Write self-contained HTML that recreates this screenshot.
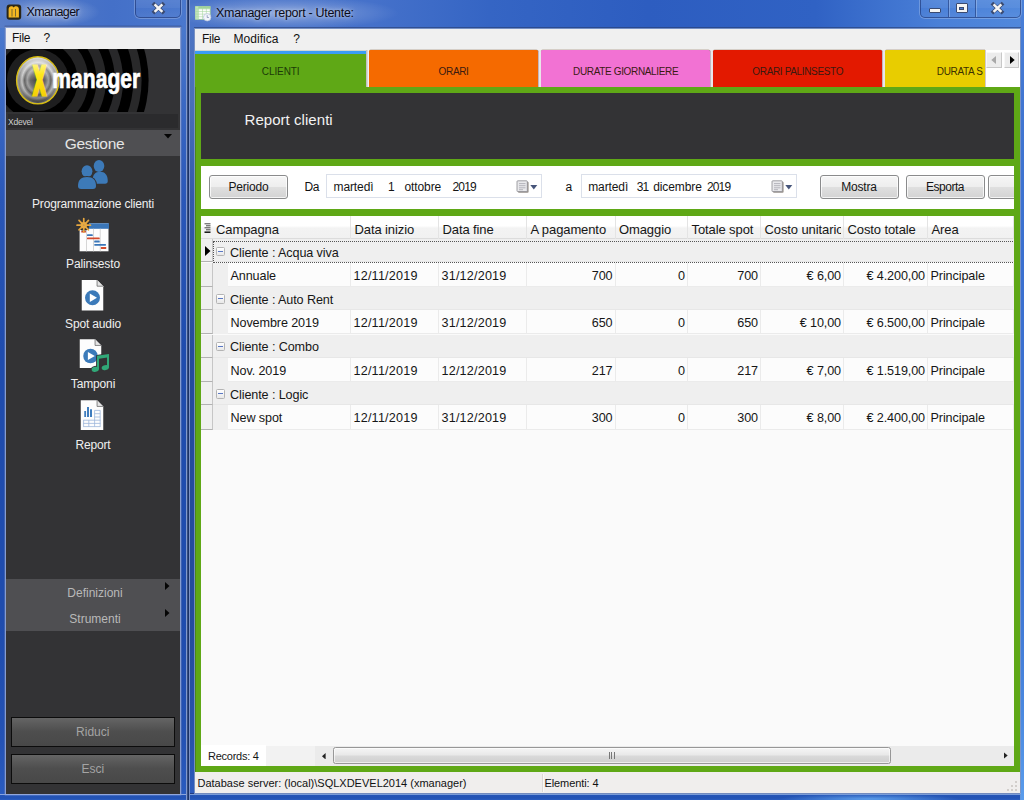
<!DOCTYPE html>
<html lang="it">
<head>
<meta charset="utf-8">
<title>Xmanager report</title>
<style>
*{box-sizing:border-box;margin:0;padding:0}
html,body{width:1024px;height:800px;overflow:hidden}
body{position:relative;font-family:"Liberation Sans",sans-serif;font-size:12px;color:#111;background:#2f5fb8}
.abs{position:absolute}
.t{position:absolute;white-space:nowrap;line-height:1}
/* ---------- frames ---------- */
#lwin{left:0;top:0;width:187px;height:800px;background:linear-gradient(180deg,#5382d4 0,#4a79cd 28px,#3b69c4 100px,#2a57b8 200px,#1f4cae 350px,#1f4cad 620px,#2452b4 740px,#2a5cc0 800px)}
#rwin{left:189px;top:0;width:835px;height:800px;background:linear-gradient(180deg,#4a7ad0 0,#4c74c4 28px,#4a70b8 100px,#3259aa 200px,#244b9c 350px,#244b9c 620px,#2852aa 740px,#2d5cc0 800px)}
#ltglow{left:0;top:0;width:187px;height:28px;background:radial-gradient(ellipse 50px 15px at 50px 12px,rgba(255,255,255,.36),rgba(255,255,255,0) 100%),linear-gradient(90deg,#587dc8 0,#4c75c7 30%,#4470c8 60%,#4a78ce 100%)}
#rtglow{left:189px;top:0;width:835px;height:29px;background:radial-gradient(ellipse 115px 17px at 95px 13px,rgba(255,255,255,.36),rgba(255,255,255,0) 100%),linear-gradient(90deg,#4a74c8 0,#4571ca 22%,#3565c4 36%,#2d5dc0 55%,#3062c4 75%,#4a80d8 90%,#5088dc 100%)}
#divider{left:186px;top:0;width:3.5px;height:800px;background:linear-gradient(90deg,#8299cc 0,#8299cc 30%,#1b3266 40%,#1b3266 64%,#7b92c6 74%,#7b92c6 100%)}
.ttl{font-size:12.5px;color:#0b0b18;text-shadow:0 0 6px rgba(255,255,255,.55),0 0 3px rgba(255,255,255,.4)}
.capbox{top:-1px;height:18.5px;border:1px solid rgba(20,40,100,.55);border-radius:0 0 5px 5px;background:linear-gradient(180deg,rgba(255,255,255,.09) 0,rgba(255,255,255,.06) 45%,rgba(255,255,255,.01) 50%,rgba(255,255,255,.05) 100%);box-shadow:0 0 0 1px rgba(255,255,255,.22)}
/* ---------- left client ---------- */
#lclient{left:6px;top:28px;width:174px;height:766px;background:#333335;box-shadow:0 0 0 1.3px rgba(150,172,222,.85),0 -1px 0 1.3px rgba(40,60,110,.6)}
#lmenu{left:0;top:0;width:174px;height:20.7px;background:#f0f0f0}
#logo{left:0;top:20.7px;width:174px;height:63.3px;background:#333335;overflow:hidden}
#xdevel{left:1.5px;top:85.8px;width:170.5px;height:13.8px;background:#2b2b2d}
.hdr{left:0;width:174px;background:#4f4f52}
.navt{color:#efefef;font-size:12px;text-align:center;left:-0.5px;width:175px;letter-spacing:-0.15px}
.btn-d{left:5px;width:163.5px;height:30px;border:1px solid #0c0c0c;background:linear-gradient(180deg,#656565 0,#5a5a5a 22%,#4e4e4e 48%,#484848 100%);color:#a4a4a4;text-align:center;font-size:12px}
/* ---------- right client ---------- */
#rclient{left:195px;top:29px;width:825px;height:764px;background:#f0f0f0;box-shadow:0 0 0 1px rgba(150,172,215,.7),0 -1px 0 1px rgba(40,60,110,.6)}
#rmenu{left:0;top:0;width:825px;height:21px;background:#f0f0f0}
.tab{top:21.4px;height:36.5px;border-radius:1.5px 1.5px 0 0;box-shadow:0 -0.5px 0 rgba(120,90,60,.45),0.8px 0 0 rgba(90,60,80,.35)}
.tabt{font-size:10px;letter-spacing:-0.35px;color:#3a1a10;top:16.3px;text-align:center}
#green{left:0;top:57.5px;width:825px;height:685.5px;background:#5fa816;box-shadow:inset 1px 0 0 rgba(60,110,30,.55)}
#dark{left:6px;top:64px;width:813px;height:66px;background:#333335}
#tool{left:6px;top:137px;width:813px;height:43px;background:#fff;overflow:hidden}
#grid{left:6px;top:186.5px;width:812.5px;height:550px;background:#fafafa;overflow:hidden}
#status{left:0;top:743px;width:825px;height:21px;background:#f0eeed}
.wbtn{top:9px;height:24px;border:1px solid #8a8b8c;border-radius:3px;background:linear-gradient(180deg,#f6f6f6 0,#eeeeee 48%,#dfdfdf 52%,#d3d3d3 100%);box-shadow:inset 0 0 0 1px rgba(255,255,255,.75)}
.wbt{font-size:12px;top:5px;left:0;width:100%;text-align:center;color:#151515;letter-spacing:-0.2px}
.dp{top:8px;height:24px;border:1px solid #dbe0ea;background:#fff}
.dpt{font-size:12px;top:5.5px;color:#151515;letter-spacing:-0.1px}
/* grid */
.gh{top:0;height:23px;border-right:1px solid #e4e4e4;overflow:hidden}
.gt{font-size:12.6px;color:#161616;letter-spacing:-0.1px}
.ind{left:0;width:12px;background:#f0f0f0;border-right:1px solid #c6c6c6;border-bottom:1px solid #b2b2b2}
.grp{left:12px;width:800.5px;background:#efefef;border-bottom:1px solid #e7e7e7}
.indent{left:12px;width:15px;background:#efefef}
.dc{background:#fcfcfc;border-right:1px solid #ebebeb;border-bottom:1px solid #ebebeb;overflow:hidden}
.ebox{left:3px;top:7.2px;width:8.6px;height:9.4px;border:1px solid #b4b4b4;background:linear-gradient(#fff,#e8e8e8);border-radius:1.5px}
.ebox:after{content:"";position:absolute;left:1px;top:3px;width:4.6px;height:1px;background:#5a78c4}
</style>
</head>
<body>
<div id="lwin" class="abs"></div>
<div id="rwin" class="abs"></div>
<div id="ltglow" class="abs"></div>
<div id="rtglow" class="abs"></div>
<div class="abs" style="left:189px;top:792.5px;width:835px;height:7.5px;background:radial-gradient(ellipse 90px 5px at 680px 6px,rgba(110,180,250,.75),rgba(110,180,250,0) 100%),linear-gradient(180deg,#1f3a80 0,#1f3a80 14%,#7a9cd8 15%,#7a9cd8 28%,#2454b6 30%,#2353b4 70%,#2a5cc0 100%)"></div>
<div class="abs" style="left:0;top:794px;width:187px;height:6px;background:linear-gradient(180deg,#8aa4dc 0,#8aa4dc 18%,#2454b6 20%,#2353b4 70%,#2a5cc0 100%)"></div>
<div id="divider" class="abs"></div>
<div class="abs" style="left:1020px;top:0;width:4px;height:800px;background:linear-gradient(90deg,rgba(120,140,190,.6) 0,rgba(120,140,190,0) 28%),linear-gradient(180deg,#4a80d8 0,#4176d2 100px,#3a70d0 250px,#3a70d0 560px,#4a88e0 710px,#5a9cec 800px)"></div>

<!-- LEFT WINDOW TITLE -->
<svg class="abs" style="left:6px;top:3.5px" width="16" height="16.500" viewBox="0 0 16 16.500"><rect x="0.600" y="0.600" width="14.600" height="15.200" rx="3" fill="#2a2618"/><path d="M2.600 13.600V5.200c0-2 1.200-3 2.700-3 1 0 1.900.5 2.400 1.400.5-.9 1.400-1.400 2.400-1.400 1.600 0 2.800 1 2.800 3v8.400z" fill="#f4b722"/><path d="M6 5v7.500M9.500 5v7.500" stroke="#7a6a30" stroke-width="1"/></svg>
<div class="t ttl" style="left:26.5px;top:6px;letter-spacing:-0.65px">Xmanager</div>
<div class="abs capbox" style="left:135px;width:45.5px">
  <svg class="abs" style="left:16.5px;top:2.6px" width="11.4" height="9.8" viewBox="0 0 13 11" overflow="visible"><path d="M1.5 1.5L11 10M11 1.5L1.5 10" stroke="#3a4a70" stroke-width="4.4" stroke-linecap="square" fill="none"/><path d="M1.8 1.5L10.7 10M10.7 1.5L1.8 10" stroke="#f4f4f4" stroke-width="2.9" fill="none"/></svg>
</div>

<div id="lclient" class="abs">
  <div id="lmenu" class="abs"><span class="t" style="left:6px;top:3.8px;font-size:12px;letter-spacing:-0.3px">File</span><span class="t" style="left:37.5px;top:3.8px;font-size:12px">?</span></div>
  <div id="logo" class="abs">
<svg class="abs" style="left:0;top:0" width="174" height="63.3" viewBox="0 0 174 63.3">
<defs><radialGradient id="dg" cx="0.5" cy="0.5" r="0.5"><stop offset="0" stop-color="#333"/><stop offset="0.35" stop-color="#606060"/><stop offset="0.5" stop-color="#999"/><stop offset="0.62" stop-color="#585858"/><stop offset="0.75" stop-color="#c0c0c0"/><stop offset="0.88" stop-color="#787878"/><stop offset="1" stop-color="#a8a8a8"/></radialGradient>
<linearGradient id="sh" x1="0" y1="0" x2="0" y2="1"><stop offset="0" stop-color="#fff" stop-opacity=".7"/><stop offset=".5" stop-color="#fff" stop-opacity=".05"/><stop offset="1" stop-color="#000" stop-opacity=".5"/></linearGradient>
<linearGradient id="yx" x1="0" y1="0" x2="0" y2="1"><stop offset="0" stop-color="#fff9b0"/><stop offset=".35" stop-color="#ffe81a"/><stop offset="1" stop-color="#f2c800"/></linearGradient></defs>
<circle cx="31.8" cy="31.3" r="110.8" fill="#000"/>
<circle cx="31.8" cy="31.3" r="103.8" fill="#29292a"/>
<circle cx="31.8" cy="31.3" r="95.5" fill="#000"/>
<circle cx="31.8" cy="31.3" r="85.3" fill="#28282a"/>
<circle cx="31.8" cy="31.3" r="77.1" fill="#000"/>
<circle cx="31.8" cy="31.3" r="68.2" fill="#262627"/>
<circle cx="31.8" cy="31.3" r="58.7" fill="#000"/>
<circle cx="31.8" cy="31.3" r="50.6" fill="#242425"/>
<circle cx="31.8" cy="31.3" r="40" fill="#000"/>
<circle cx="31.8" cy="31.3" r="31" fill="#1e1e1f"/>
<ellipse cx="31.8" cy="31.3" rx="21.2" ry="23.6" fill="url(#dg)" stroke="#d9be10" stroke-width="1.4"/>
<ellipse cx="31.8" cy="31.3" rx="20.4" ry="22.8" fill="url(#sh)"/>
<text x="27.7" y="45.3" font-family="Liberation Sans, sans-serif" font-weight="bold" font-size="39" fill="url(#yx)" stroke="url(#yx)" stroke-width="5.2" stroke-linejoin="miter" textLength="11.4" lengthAdjust="spacingAndGlyphs">X</text>
<text x="46.3" y="39.1" font-family="Liberation Sans, sans-serif" font-weight="bold" font-size="28.5" fill="#fff" stroke="#fff" stroke-width="0.7" textLength="88" lengthAdjust="spacingAndGlyphs">manager</text>
</svg>
  </div>
  <div id="xdevel" class="abs"><span class="t" style="left:0.5px;top:3.8px;font-size:8.5px;color:#d0d0d0;letter-spacing:-0.2px">Xdevel</span></div>
  <div class="abs hdr" style="top:102px;height:26px"><span class="t" style="left:0;width:177px;text-align:center;top:5.5px;font-size:15.5px;color:#e4e4e4;letter-spacing:-0.3px">Gestione</span>
    <svg class="abs" style="left:158px;top:4px" width="8" height="5" viewBox="0 0 8 5"><path d="M0 0h8L4 4.5z" fill="#050505"/></svg>
  </div>
<svg class="abs" style="left:0;top:100px" width="175" height="340" viewBox="6 128 175 340">
<g fill="#3d7ab8"><ellipse cx="99" cy="166" rx="5.3" ry="5.9"/><path d="M92.5 183.75V181C92.5 175 95 171.75 100 171.75C105 171.75 107.75 175 107.75 181Q107.75 183.75 105 183.75z"/><g stroke="#333335" stroke-width="2" paint-order="stroke"><ellipse cx="87" cy="171.25" rx="5.4" ry="5.9"/><path d="M78 186C78 180 81 177 87 177C93 177 96 180 96 186Q96 189 93 189H81Q78 189 78 186z"/></g></g>
<g><rect x="79.6" y="223.3" width="28.9" height="28" fill="#fdfdfd"/><rect x="79.6" y="223.3" width="29.4" height="5.5" fill="#3a76b8"/><path d="M86.5 228.8v22.5M93.5 228.8v22.5M100.25 228.8v22.5" stroke="#d6d6d6" stroke-width="1"/><rect x="87" y="234.2" width="5.8" height="1.8" rx="0.6" fill="#3a76b8"/><rect x="87" y="237.5" width="12.7" height="1.8" rx="0.6" fill="#d24a2c"/><rect x="94.2" y="240.6" width="5.5" height="1.9" rx="0.6" fill="#3a76b8"/><rect x="94.2" y="243.9" width="11.8" height="1.8" rx="0.6" fill="#3a76b8"/><rect x="100.8" y="247" width="5.5" height="1.9" rx="0.6" fill="#d24a2c"/><circle cx="83.75" cy="225.2" r="5.6" fill="#333335"/><rect x="79" y="223" width="9.7" height="6.6" fill="#333335"/><path d="M81.3 231h4.6v1.5h-4.6z" fill="#c8402a"/><path d="M85.75 225.20L90.45 225.20M85.16 226.61L88.49 229.94M83.75 227.20L83.75 231.90M82.34 226.61L79.01 229.94M81.75 225.20L77.05 225.20M82.34 223.79L79.01 220.46M83.75 223.20L83.75 218.50M85.16 223.79L88.49 220.46" stroke="#e6a63e" stroke-width="1.7" stroke-linecap="round" fill="none"/><circle cx="83.75" cy="225.2" r="3.2" fill="#e8aa42"/><circle cx="83.75" cy="225.2" r="0.9" fill="#c89a50"/></g>
<path d="M81.75 280H97.05L103.25 286.2V310.5H81.75z" fill="#fdfdfd"/><path d="M97.05 280V286.2H103.25z" fill="#e4e4e4"/><path d="M97.05 280V286.2H103.25" stroke="#5a5a5a" stroke-width="0.7" fill="none"/><circle cx="92.5" cy="297.75" r="7.5" fill="#3b7ab9"/><path d="M89.80 293.55L97.00 297.75L89.80 301.95z" fill="#fff"/>
<path d="M79.75 339.25H95.05L101.25 345.45V368H79.75z" fill="#fdfdfd"/><path d="M95.05 339.25V345.45H101.25z" fill="#e4e4e4"/><path d="M95.05 339.25V345.45H101.25" stroke="#5a5a5a" stroke-width="0.7" fill="none"/><circle cx="90.5" cy="356" r="7.25" fill="#3b7ab9"/><path d="M87.89 351.94L94.85 356L87.89 360.06z" fill="#fff"/>
<path d="M99 358.8L107 357.5V366L103 367.5L102 369H99z" fill="#333335"/><g fill="#333335" stroke="#333335" stroke-width="1.8" stroke-linejoin="round"><path d="M97 355.8L109 354V357.2L99 358.8V369.2H97z"/><rect x="107" y="355" width="2" height="12.6"/><ellipse cx="95.3" cy="369.3" rx="3.7" ry="2.5" transform="rotate(-14 95.3 369.3)"/><ellipse cx="105.3" cy="367.6" rx="3.7" ry="2.5" transform="rotate(-14 105.3 367.6)"/></g><g fill="#31a878"><path d="M97 355.8L109 354V357.2L99 358.8V369.2H97z"/><rect x="107" y="355" width="2" height="12.6"/><ellipse cx="95.3" cy="369.3" rx="3.7" ry="2.5" transform="rotate(-14 95.3 369.3)"/><ellipse cx="105.3" cy="367.6" rx="3.7" ry="2.5" transform="rotate(-14 105.3 367.6)"/></g>
<path d="M80.75 400.25H97.05L103.25 406.45V430H80.75z" fill="#fdfdfd"/><path d="M97.05 400.25V406.45H103.25z" fill="#e4e4e4"/><path d="M97.05 400.25V406.45H103.25" stroke="#5a5a5a" stroke-width="0.7" fill="none"/>
<g fill="#3f7dbe"><rect x="84.250" y="411" width="1.800" height="6"/><rect x="87" y="407" width="2" height="10"/><rect x="90" y="409.250" width="2" height="7.750"/></g><g stroke="#9db6da" stroke-width="0.8" fill="none"><path d="M83.250 420.200h17.250M83.250 423.400h17.250M83.250 426.600h17.250M83.600 420.200v6.400M88.800 420.200v6.400M94.600 410.400v16.200M100.200 410.400v16.200M94.600 410.400h5.600M94.600 413.700h5.600M94.600 417h5.600"/></g>
</svg>
  <div class="t navt" style="top:170px">Programmazione clienti</div>
  <div class="t navt" style="top:230px">Palinsesto</div>
  <div class="t navt" style="top:290px">Spot audio</div>
  <div class="t navt" style="top:350px">Tamponi</div>
  <div class="t navt" style="top:410.5px">Report</div>
  <div class="abs hdr" style="top:550.7px;height:52.2px">
    <span class="t" style="left:0;width:178px;text-align:center;top:8px;font-size:12px;color:#b9b9b9">Definizioni</span>
    <span class="t" style="left:0;width:178px;text-align:center;top:34px;font-size:12px;color:#b9b9b9">Strumenti</span>
    <svg class="abs" style="left:158.5px;top:3.5px" width="5" height="8" viewBox="0 0 5 8"><path d="M0 0v8L4.5 4z" fill="#050505"/></svg>
    <svg class="abs" style="left:158.5px;top:30px" width="5" height="8" viewBox="0 0 5 8"><path d="M0 0v8L4.5 4z" fill="#050505"/></svg>
  </div>
  <div class="abs btn-d" style="top:689px"><span class="t" style="left:0;width:100%;top:8px">Riduci</span></div>
  <div class="abs btn-d" style="top:726px"><span class="t" style="left:0;width:100%;top:8px">Esci</span></div>
</div>

<!-- RIGHT WINDOW TITLE -->
<svg class="abs" style="left:195px;top:5.5px" width="17" height="16.500" viewBox="0 0 17 16.500"><rect x="0.400" y="0.500" width="14.800" height="12.800" fill="#fbfdfb" stroke="#9acb94" stroke-width="0.7"/><rect x="0.400" y="0.500" width="14.800" height="2.200" fill="#9fd398"/><rect x="0.400" y="0.500" width="3" height="12.800" fill="#bfe2ba"/><path d="M0.400 2.900h14.800M0.400 5.500h14.800M0.400 8.100h14.800M0.400 10.700h14.800M3.600 0.500v12.800M7.500 0.500v12.800M11.400 0.500v12.800" stroke="#a6d6a0" stroke-width="0.55" fill="none"/><circle cx="12.200" cy="11.300" r="3.700" fill="#f2f5fb" stroke="#b4c0da" stroke-width="0.7"/><path d="M12.200 9.200v2.300h1.700" stroke="#7684a6" stroke-width="0.7" fill="none"/></svg>
<div class="t ttl" style="left:216px;top:7.3px;letter-spacing:-0.3px">Xmanager report - Utente:</div>
<div class="abs capbox" style="left:920px;width:100.5px">
  <span class="abs" style="left:27px;top:0;width:1px;height:17px;background:rgba(20,40,100,.5);box-shadow:1px 0 0 rgba(255,255,255,.25)"></span>
  <span class="abs" style="left:53.5px;top:0;width:1px;height:17px;background:rgba(20,40,100,.5);box-shadow:1px 0 0 rgba(255,255,255,.25)"></span>
  <span class="abs" style="left:8px;top:8px;width:12px;height:5px;background:#f4f4f4;border:1px solid #3a4a70;border-radius:1px"></span>
  <span class="abs" style="left:34.5px;top:3px;width:12px;height:10px;border:1px solid #3a4a70;background:#f4f4f4;border-radius:1px"><span class="abs" style="left:2.5px;top:2.5px;width:5px;height:3px;background:#4a78cc;border:1px solid #3a4a70"></span></span>
  <svg class="abs" style="left:71.3px;top:2.6px" width="11.4" height="9.8" viewBox="0 0 13 11" overflow="visible"><path d="M1.5 1.5L11 10M11 1.5L1.5 10" stroke="#3a4a70" stroke-width="4.4" stroke-linecap="square" fill="none"/><path d="M1.8 1.5L10.7 10M10.7 1.5L1.8 10" stroke="#f4f4f4" stroke-width="2.9" fill="none"/></svg>
</div>

<div id="rclient" class="abs">
  <div id="rmenu" class="abs"><span class="t" style="left:7px;top:3.8px;font-size:12px;letter-spacing:-0.3px">File</span><span class="t" style="left:38.5px;top:3.8px;font-size:12px;letter-spacing:0.05px">Modifica</span><span class="t" style="left:98.3px;top:3.8px;font-size:12px">?</span></div>
  <div class="abs" style="left:0;top:21px;width:825px;height:37px;background:#fff"></div><div class="abs" style="left:172px;top:21.4px;width:520px;height:36.5px;background:#e9e5e9"></div>
  <div class="abs" style="left:0;top:21.4px;width:171.25px;height:1px;background:#cfd8d0"></div><div class="abs" style="left:0;top:22px;width:171.25px;height:37px;background:#5fa816;border-top:3px solid #3a9df5"><span class="t tabt" style="left:0;width:100%;top:13.2px;color:#1c3a08;letter-spacing:-0.1px">CLIENTI</span></div>
  <div class="abs" style="left:171.25px;top:21.4px;width:2.75px;height:36.5px;background:linear-gradient(90deg,#b8b8b8 0,#d8d8d8 50%,#fff 100%)"></div>
  <div class="abs tab" style="left:174px;width:169.1px;background:#f56a00"><span class="t tabt" style="left:0;width:100%">ORARI</span></div>
  <div class="abs tab" style="left:346.1px;width:169.1px;background:#f272d3"><span class="t tabt" style="left:0;width:100%">DURATE GIORNALIERE</span></div>
  <div class="abs tab" style="left:518.2px;width:169.1px;background:#e31900"><span class="t tabt" style="left:0;width:100%">ORARI PALINSESTO</span></div>
  <div class="abs tab" style="left:690.3px;width:99.3px;background:#e8cd00;overflow:hidden;border-radius:1.5px 0 0 0"><span class="t tabt" style="left:51.5px;color:#3a3000">DURATA S</span></div>
  <div class="abs" style="left:791px;top:22.5px;width:15.5px;height:16.5px;background:#ececec;border:1px solid #c8c8c8;border-top-color:#f8f8f8;border-left-color:#f8f8f8"><svg class="abs" style="left:4px;top:3px" width="5" height="8" viewBox="0 0 5 8"><path d="M5 0v8L0.3 4z" fill="#a8a8a8"/></svg></div>
  <div class="abs" style="left:808.5px;top:22.5px;width:15.5px;height:16.5px;background:#ececec;border:1px solid #c8c8c8;border-top-color:#f8f8f8;border-left-color:#f8f8f8"><svg class="abs" style="left:5px;top:3px" width="5" height="8" viewBox="0 0 5 8"><path d="M0 0v8L4.7 4z" fill="#000"/></svg></div>
  <div id="green" class="abs"></div>
  <div id="dark" class="abs"><span class="t" style="left:43.5px;top:19px;font-size:15px;color:#f2f2f2;letter-spacing:0.05px">Report clienti</span></div>
  <div id="tool" class="abs">
    <div class="abs wbtn" style="left:8px;width:79px"><span class="t wbt">Periodo</span></div>
    <span class="t" style="left:103.5px;top:14.5px;font-size:12px;letter-spacing:-0.4px">Da</span>
    <div class="abs dp" style="left:125px;width:216.4px">
      <span class="t dpt" style="left:6.5px">martedì</span><span class="t dpt" style="left:61px">1</span><span class="t dpt" style="left:77.5px">ottobre</span><span class="t dpt" style="left:125.5px;letter-spacing:-0.8px">2019</span>
<svg class="abs" style="left:189px;top:4.500px" width="22" height="14" viewBox="0 0 22 14"><rect x="2" y="1.800" width="10.600" height="11" rx="1" fill="#9a948e"/><rect x="1" y="0.800" width="10.300" height="10.800" rx="0.800" fill="#e9e9ec" stroke="#8a8a90" stroke-width="0.8"/><path d="M3 3.600h6.500M3 5.700h6.500M3 7.800h6.500M3 9.700h4" stroke="#a6a6ae" stroke-width="0.8"/><path d="M14.300 5h7l-3.500 4.400z" fill="#46557a"/></svg>
    </div>
    <span class="t" style="left:364.5px;top:14.5px;font-size:12px">a</span>
    <div class="abs dp" style="left:379.7px;width:216px">
      <span class="t dpt" style="left:6.5px">martedì</span><span class="t dpt" style="left:55px;letter-spacing:-0.8px">31</span><span class="t dpt" style="left:71.5px">dicembre</span><span class="t dpt" style="left:125.2px;letter-spacing:-0.8px">2019</span>
<svg class="abs" style="left:189px;top:4.500px" width="22" height="14" viewBox="0 0 22 14"><rect x="2" y="1.800" width="10.600" height="11" rx="1" fill="#9a948e"/><rect x="1" y="0.800" width="10.300" height="10.800" rx="0.800" fill="#e9e9ec" stroke="#8a8a90" stroke-width="0.8"/><path d="M3 3.600h6.500M3 5.700h6.500M3 7.800h6.500M3 9.700h4" stroke="#a6a6ae" stroke-width="0.8"/><path d="M14.300 5h7l-3.500 4.400z" fill="#46557a"/></svg>
    </div>
    <div class="abs wbtn" style="left:618.5px;width:79px"><span class="t wbt">Mostra</span></div>
    <div class="abs wbtn" style="left:704.5px;width:79px"><span class="t wbt" style="letter-spacing:-0.45px">Esporta</span></div>
    <div class="abs wbtn" style="left:786.6px;width:40px"></div>
  </div>
  <div id="grid" class="abs">
<div class="abs" style="left:0;top:0;width:813px;height:23px;background:linear-gradient(180deg,#fff 0,#fff 45%,#f3f3f3 55%,#f1f1f1 100%);border-bottom:1px solid #dcdcdc"></div>
<svg class="abs" style="left:3px;top:7.5px" width="7" height="11" viewBox="0 0 7 11"><path d="M0.500 0.800h6M2 2.800h4.500M0.500 4.800h6M2 6.800h4.500" stroke="#333" stroke-width="0.9" fill="none"/><path d="M0.500 9.200h6" stroke="#111" stroke-width="1.500" fill="none"/></svg>
<div class="gh abs" style="left:12px;width:138px;border-right-width:0"><span class="abs" style="right:0;top:0;width:1px;height:23px;background:#e4e4e4"></span></div><div class="gh abs" style="left:12px;width:135.4px;border-right-width:0"><span class="t gt" style="left:3px;top:7.1px;font-size:13px;letter-spacing:-0.1px">Campagna</span></div>
<div class="gh abs" style="left:150px;width:88px;border-right-width:0"><span class="abs" style="right:0;top:0;width:1px;height:23px;background:#e4e4e4"></span></div><div class="gh abs" style="left:150px;width:85.4px;border-right-width:0"><span class="t gt" style="left:3.5px;top:7.1px;font-size:13px;letter-spacing:-0.1px">Data inizio</span></div>
<div class="gh abs" style="left:238px;width:88px;border-right-width:0"><span class="abs" style="right:0;top:0;width:1px;height:23px;background:#e4e4e4"></span></div><div class="gh abs" style="left:238px;width:85.4px;border-right-width:0"><span class="t gt" style="left:3.5px;top:7.1px;font-size:13px;letter-spacing:-0.1px">Data fine</span></div>
<div class="gh abs" style="left:326px;width:88.5px;border-right-width:0"><span class="abs" style="right:0;top:0;width:1px;height:23px;background:#e4e4e4"></span></div><div class="gh abs" style="left:326px;width:85.9px;border-right-width:0"><span class="t gt" style="left:3.5px;top:7.1px;font-size:13px;letter-spacing:-0.1px">A pagamento</span></div>
<div class="gh abs" style="left:414.5px;width:72.5px;border-right-width:0"><span class="abs" style="right:0;top:0;width:1px;height:23px;background:#e4e4e4"></span></div><div class="gh abs" style="left:414.5px;width:69.9px;border-right-width:0"><span class="t gt" style="left:3.5px;top:7.1px;font-size:13px;letter-spacing:-0.1px">Omaggio</span></div>
<div class="gh abs" style="left:487px;width:73px;border-right-width:0"><span class="abs" style="right:0;top:0;width:1px;height:23px;background:#e4e4e4"></span></div><div class="gh abs" style="left:487px;width:70.4px;border-right-width:0"><span class="t gt" style="left:3.5px;top:7.1px;font-size:13px;letter-spacing:-0.1px">Totale spot</span></div>
<div class="gh abs" style="left:560px;width:83px;border-right-width:0"><span class="abs" style="right:0;top:0;width:1px;height:23px;background:#e4e4e4"></span></div><div class="gh abs" style="left:560px;width:80.4px;border-right-width:0"><span class="t gt" style="left:3.5px;top:7.1px;font-size:13px;letter-spacing:-0.1px">Costo unitario</span></div>
<div class="gh abs" style="left:643px;width:84px;border-right-width:0"><span class="abs" style="right:0;top:0;width:1px;height:23px;background:#e4e4e4"></span></div><div class="gh abs" style="left:643px;width:81.4px;border-right-width:0"><span class="t gt" style="left:3.5px;top:7.1px;font-size:13px;letter-spacing:-0.1px">Costo totale</span></div>
<div class="gh abs" style="left:727px;width:86px;border-right-width:0"><span class="abs" style="right:0;top:0;width:1px;height:23px;background:#e4e4e4"></span></div><div class="gh abs" style="left:727px;width:83.4px;border-right-width:0"><span class="t gt" style="left:3.5px;top:7.1px;font-size:13px;letter-spacing:-0.1px">Area</span></div>
<div class="abs ind" style="top:23.9px;height:23.1px"></div>
<div class="abs grp" style="top:23.9px;height:23.1px"><span class="abs ebox"></span><span class="t gt" style="left:17px;top:7.7px">Cliente : Acqua viva</span></div>
<div class="abs" style="left:12px;top:25.3px;width:800px;height:22.3px;border:1px dotted #555;border-right:none"></div>
<svg class="abs" style="left:4px;top:30.9px" width="6" height="10" viewBox="0 0 6 10"><path d="M0 0L5.5 5L0 10z" fill="#000"/></svg>
<div class="abs ind" style="top:47px;height:24.45px"></div>
<div class="abs indent" style="top:47px;height:24.45px"></div>
<div class="abs dc" style="left:27px;top:47px;width:123px;height:24.45px"><span class="t gt" style="left:2.5px;top:7.8px">Annuale</span></div>
<div class="abs dc" style="left:150px;top:47px;width:88px;height:24.45px"><span class="t gt" style="left:2.5px;top:7.8px;letter-spacing:0.2px">12/11/2019</span></div>
<div class="abs dc" style="left:238px;top:47px;width:88px;height:24.45px"><span class="t gt" style="left:2.5px;top:7.8px;letter-spacing:0.2px">31/12/2019</span></div>
<div class="abs dc" style="left:326px;top:47px;width:88.5px;height:24.45px"><span class="t gt" style="right:2px;top:7.8px">700</span></div>
<div class="abs dc" style="left:414.5px;top:47px;width:72.5px;height:24.45px"><span class="t gt" style="right:2px;top:7.8px">0</span></div>
<div class="abs dc" style="left:487px;top:47px;width:73px;height:24.45px"><span class="t gt" style="right:2px;top:7.8px">700</span></div>
<div class="abs dc" style="left:560px;top:47px;width:83px;height:24.45px"><span class="t gt" style="right:2px;top:7.8px">€ 6,00</span></div>
<div class="abs dc" style="left:643px;top:47px;width:84px;height:24.45px"><span class="t gt" style="right:2px;top:7.8px">€ 4.200,00</span></div>
<div class="abs dc" style="left:727px;top:47px;width:86px;height:24.45px"><span class="t gt" style="left:2.5px;top:7.8px">Principale</span></div>
<div class="abs ind" style="top:71.45px;height:23.1px"></div>
<div class="abs grp" style="top:71.45px;height:23.1px"><span class="abs ebox"></span><span class="t gt" style="left:17px;top:6.9px">Cliente : Auto Rent</span></div>
<div class="abs ind" style="top:94.55px;height:24.45px"></div>
<div class="abs indent" style="top:94.55px;height:24.45px"></div>
<div class="abs dc" style="left:27px;top:94.55px;width:123px;height:24.45px"><span class="t gt" style="left:2.5px;top:7px">Novembre 2019</span></div>
<div class="abs dc" style="left:150px;top:94.55px;width:88px;height:24.45px"><span class="t gt" style="left:2.5px;top:7px;letter-spacing:0.2px">12/11/2019</span></div>
<div class="abs dc" style="left:238px;top:94.55px;width:88px;height:24.45px"><span class="t gt" style="left:2.5px;top:7px;letter-spacing:0.2px">31/12/2019</span></div>
<div class="abs dc" style="left:326px;top:94.55px;width:88.5px;height:24.45px"><span class="t gt" style="right:2px;top:7px">650</span></div>
<div class="abs dc" style="left:414.5px;top:94.55px;width:72.5px;height:24.45px"><span class="t gt" style="right:2px;top:7px">0</span></div>
<div class="abs dc" style="left:487px;top:94.55px;width:73px;height:24.45px"><span class="t gt" style="right:2px;top:7px">650</span></div>
<div class="abs dc" style="left:560px;top:94.55px;width:83px;height:24.45px"><span class="t gt" style="right:2px;top:7px">€ 10,00</span></div>
<div class="abs dc" style="left:643px;top:94.55px;width:84px;height:24.45px"><span class="t gt" style="right:2px;top:7px">€ 6.500,00</span></div>
<div class="abs dc" style="left:727px;top:94.55px;width:86px;height:24.45px"><span class="t gt" style="left:2.5px;top:7px">Principale</span></div>
<div class="abs ind" style="top:119px;height:23.1px"></div>
<div class="abs grp" style="top:119px;height:23.1px"><span class="abs ebox"></span><span class="t gt" style="left:17px;top:6.9px">Cliente : Combo</span></div>
<div class="abs ind" style="top:142.1px;height:24.45px"></div>
<div class="abs indent" style="top:142.1px;height:24.45px"></div>
<div class="abs dc" style="left:27px;top:142.1px;width:123px;height:24.45px"><span class="t gt" style="left:2.5px;top:7px">Nov. 2019</span></div>
<div class="abs dc" style="left:150px;top:142.1px;width:88px;height:24.45px"><span class="t gt" style="left:2.5px;top:7px;letter-spacing:0.2px">12/11/2019</span></div>
<div class="abs dc" style="left:238px;top:142.1px;width:88px;height:24.45px"><span class="t gt" style="left:2.5px;top:7px;letter-spacing:0.2px">12/12/2019</span></div>
<div class="abs dc" style="left:326px;top:142.1px;width:88.5px;height:24.45px"><span class="t gt" style="right:2px;top:7px">217</span></div>
<div class="abs dc" style="left:414.5px;top:142.1px;width:72.5px;height:24.45px"><span class="t gt" style="right:2px;top:7px">0</span></div>
<div class="abs dc" style="left:487px;top:142.1px;width:73px;height:24.45px"><span class="t gt" style="right:2px;top:7px">217</span></div>
<div class="abs dc" style="left:560px;top:142.1px;width:83px;height:24.45px"><span class="t gt" style="right:2px;top:7px">€ 7,00</span></div>
<div class="abs dc" style="left:643px;top:142.1px;width:84px;height:24.45px"><span class="t gt" style="right:2px;top:7px">€ 1.519,00</span></div>
<div class="abs dc" style="left:727px;top:142.1px;width:86px;height:24.45px"><span class="t gt" style="left:2.5px;top:7px">Principale</span></div>
<div class="abs ind" style="top:166.55px;height:23.1px"></div>
<div class="abs grp" style="top:166.55px;height:23.1px"><span class="abs ebox"></span><span class="t gt" style="left:17px;top:6.9px">Cliente : Logic</span></div>
<div class="abs ind" style="top:189.65px;height:24.45px"></div>
<div class="abs indent" style="top:189.65px;height:24.45px"></div>
<div class="abs dc" style="left:27px;top:189.65px;width:123px;height:24.45px"><span class="t gt" style="left:2.5px;top:7px">New spot</span></div>
<div class="abs dc" style="left:150px;top:189.65px;width:88px;height:24.45px"><span class="t gt" style="left:2.5px;top:7px;letter-spacing:0.2px">12/11/2019</span></div>
<div class="abs dc" style="left:238px;top:189.65px;width:88px;height:24.45px"><span class="t gt" style="left:2.5px;top:7px;letter-spacing:0.2px">31/12/2019</span></div>
<div class="abs dc" style="left:326px;top:189.65px;width:88.5px;height:24.45px"><span class="t gt" style="right:2px;top:7px">300</span></div>
<div class="abs dc" style="left:414.5px;top:189.65px;width:72.5px;height:24.45px"><span class="t gt" style="right:2px;top:7px">0</span></div>
<div class="abs dc" style="left:487px;top:189.65px;width:73px;height:24.45px"><span class="t gt" style="right:2px;top:7px">300</span></div>
<div class="abs dc" style="left:560px;top:189.65px;width:83px;height:24.45px"><span class="t gt" style="right:2px;top:7px">€ 8,00</span></div>
<div class="abs dc" style="left:643px;top:189.65px;width:84px;height:24.45px"><span class="t gt" style="right:2px;top:7px">€ 2.400,00</span></div>
<div class="abs dc" style="left:727px;top:189.65px;width:86px;height:24.45px"><span class="t gt" style="left:2.5px;top:7px">Principale</span></div>
<div class="abs" style="left:0;top:530.300px;width:812.500px;height:20.200px;background:#f2f2f2"></div><div class="abs" style="left:0;top:529.500px;width:65px;height:21px;background:#fff"><span class="t" style="left:7px;top:5.500px;font-size:11px;letter-spacing:-0.25px;color:#161616">Records: 4</span></div><div class="abs" style="left:114px;top:530.300px;width:698.500px;height:20.200px;background:#ebebeb"></div><svg class="abs" style="left:120.800px;top:537px" width="4" height="6.500" viewBox="0 0 5 8"><path d="M4.500 0v8L0 4z" fill="#222"/></svg><svg class="abs" style="left:802.500px;top:536.700px" width="4.400" height="7" viewBox="0 0 5 8"><path d="M0 0.500v7L4.200 4z" fill="#222"/></svg><div class="abs" style="left:132px;top:531.500px;width:558px;height:17px;border:1px solid #979797;border-radius:2.500px;background:linear-gradient(180deg,#f5f5f5 0,#e9e9e9 45%,#d9d9d9 55%,#cfcfcf 100%);box-shadow:inset 0 0 0 1px rgba(255,255,255,.6)"><span class="abs" style="left:275px;top:4px;width:7px;height:7px;background:repeating-linear-gradient(90deg,#777 0,#777 1px,transparent 1px,transparent 2.300px)"></span></div>
  </div>
  <div id="status" class="abs"><span class="abs" style="left:346.5px;top:2px;width:1px;height:18px;background:#dcd8d5;box-shadow:1px 0 0 #faf8f7"></span><span class="t" style="left:2.5px;top:6px;font-size:11px;letter-spacing:0">Database server: (local)\SQLXDEVEL2014 (xmanager)</span><span class="t" style="left:349.5px;top:6px;font-size:11px;letter-spacing:-0.1px">Elementi: 4</span>
    <svg class="abs" style="left:812px;top:9px" width="11" height="11" viewBox="0 0 11 11"><g fill="#d2cecb"><rect x="8" y="0" width="2" height="2"/><rect x="4" y="4" width="2" height="2"/><rect x="8" y="4" width="2" height="2"/><rect x="0" y="8" width="2" height="2"/><rect x="4" y="8" width="2" height="2"/><rect x="8" y="8" width="2" height="2"/></g></svg>
  </div>
</div>
</body>
</html>
